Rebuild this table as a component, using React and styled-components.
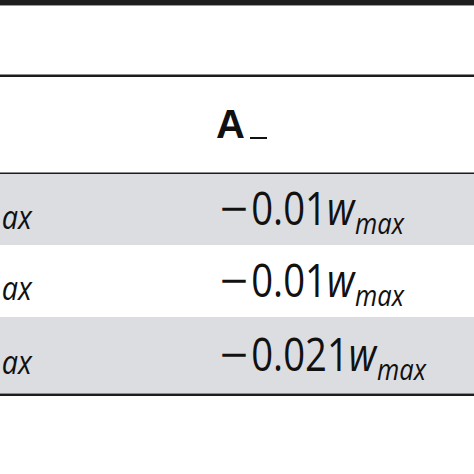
import React from "react";
import styled, { createGlobalStyle } from "styled-components";

const GlobalStyle = createGlobalStyle`
  html, body {
    margin: 0;
    padding: 0;
    background: #ffffff;
  }
  body {
    width: 474px;
    height: 474px;
    overflow: hidden;
    font-family: "Open Sans", "Noto Sans", sans-serif;
    color: #111;
  }
`;

const Page = styled.div`
  width: 474px;
  display: flex;
  flex-direction: column;
`;

const TopRule = styled.div`
  height: 5px;
  background: #1e1e1e;
  border-bottom: 1px solid #9a9a9a;
`;

const Spacer = styled.div`
  height: 68px;
`;

const Rule = styled.div`
  height: ${props => props.h || 2}px;
  background: #1c1c1c;
  border-top: 1px solid #8c8c8c;
`;

const Row = styled.div`
  display: grid;
  grid-template-columns: 200px 1fr;
  height: ${props => props.h}px;
  background: ${props => (props.shaded ? "#dcdde0" : "#ffffff")};
  align-items: center;
  overflow: hidden;
`;

const LeftCell = styled.div`
  font-style: italic;
  font-size: 32px;
  padding-left: 2px;
  padding-top: 14px;
  line-height: 1;
  transform: scaleX(0.9);
  transform-origin: left center;
`;

const ValueCell = styled.div`
  padding-left: 20px;
  padding-bottom: 4px;
  font-size: 45px;
  line-height: 1;
  white-space: nowrap;
  transform: scaleX(0.85);
  transform-origin: 20px center;
`;

const Minus = styled.span`
  display: inline-block;
  transform: scaleX(1.3);
  transform-origin: left center;
  margin-right: 11px;
`;

const HeadCell = styled.div`
  padding-left: 16px;
  padding-bottom: 2px;
  font-family: "Liberation Sans", Arial, sans-serif;
  font-size: 40px;
  font-weight: 700;
  line-height: 1;
`;

const Var = styled.span`
  font-style: italic;
`;

const Sub = styled.sub`
  font-size: 30px;
  font-style: italic;
  font-weight: 400;
  vertical-align: -9px;
  line-height: 0;
  margin-left: 1px;
`;

const HeadSub = styled.span`
  display: inline-block;
  width: 17px;
  height: 1.6px;
  background: #111;
  margin-left: 5px;
  vertical-align: -1px;
`;

const rows = [
  { value: "0.01", h: 71, shaded: true },
  { value: "0.01", h: 72, shaded: false },
  { value: "0.021", h: 76, shaded: true }
];

export default function App() {
  return (
    <Page>
      <GlobalStyle />
      <TopRule />
      <Spacer />
      <Rule h={2} />
      <Row h={95}>
        <div />
        <HeadCell>
          A<HeadSub />
        </HeadCell>
      </Row>
      <Rule h={1} />
      {rows.map((row, i) => (
        <Row key={i} h={row.h} shaded={row.shaded}>
          <LeftCell>ax</LeftCell>
          <ValueCell>
            <Minus>−</Minus>
            {row.value}
            <Var>w</Var>
            <Sub>max</Sub>
          </ValueCell>
        </Row>
      ))}
      <Rule h={2} />
    </Page>
  );
}
